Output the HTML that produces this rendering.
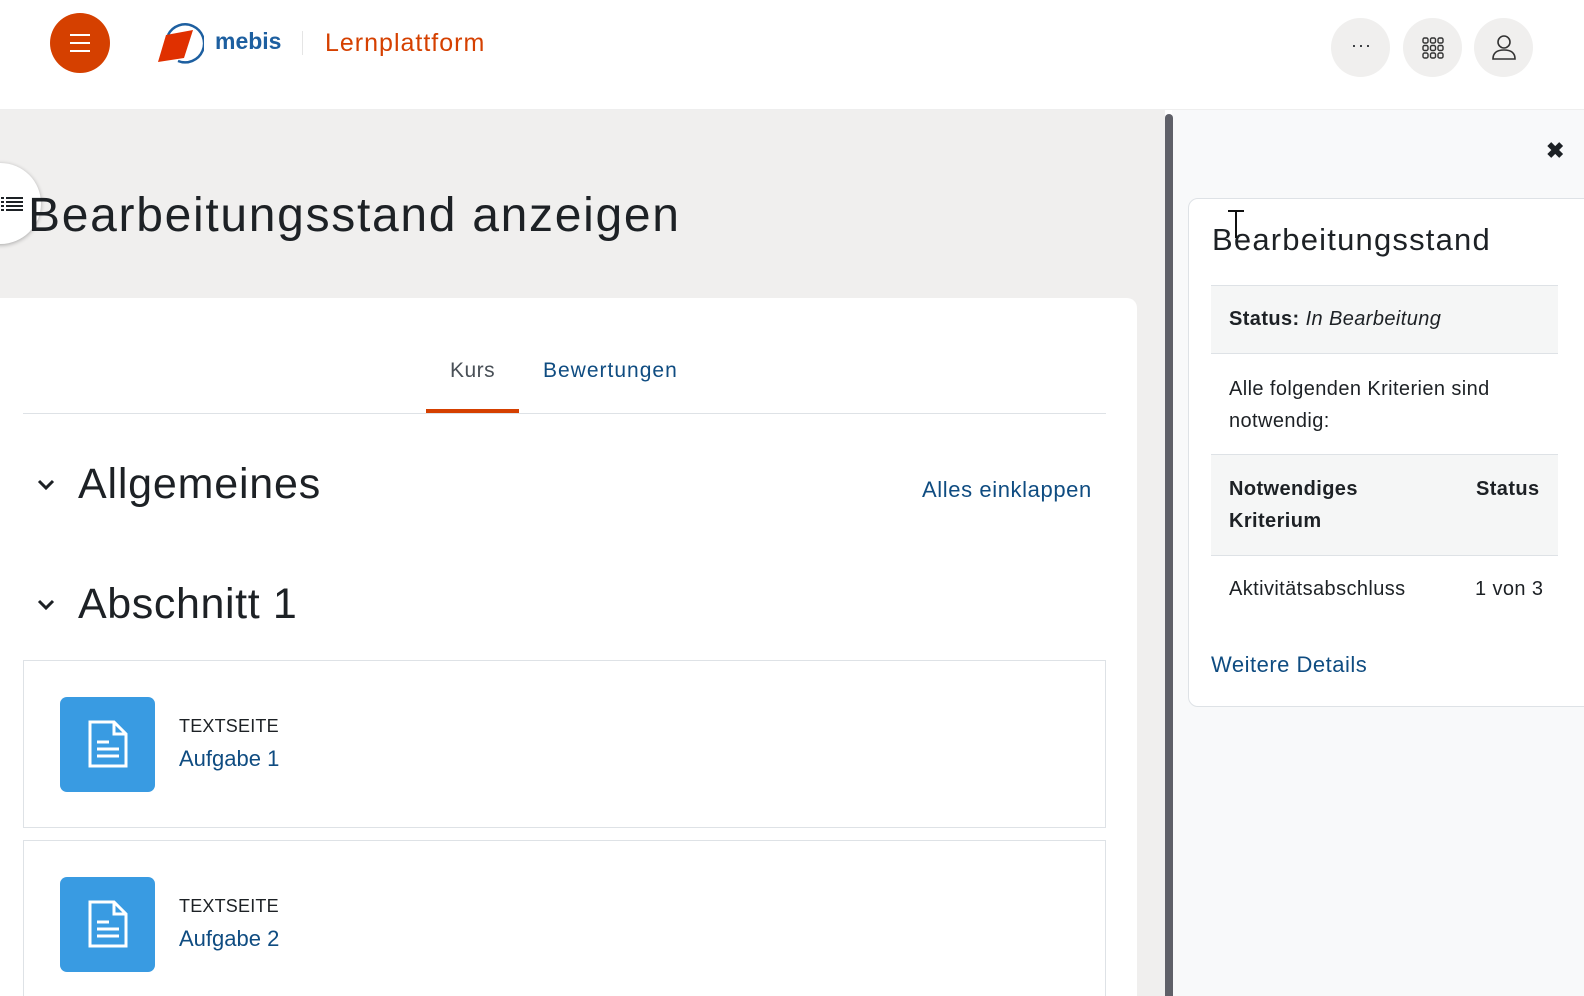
<!DOCTYPE html>
<html><head><meta charset="utf-8"><style>
*{box-sizing:border-box;margin:0;padding:0}
html,body{width:1584px;height:996px;overflow:hidden}
body{background:#fff;font-family:"Liberation Sans",sans-serif;color:#1d2125;position:relative}
.abs{position:absolute}
.hdr{left:0;top:0;width:1584px;height:110px;background:#fff;border-bottom:1px solid #eee}
.burger{left:50px;top:13px;width:60px;height:60px;border-radius:50%;background:#d54000}
.burger i{position:absolute;left:20px;width:20px;height:2px;background:#fff}
.rb{top:18px;width:59px;height:59px;border-radius:50%;background:#f0efee}
.main{left:0;top:110px;width:1165px;height:886px;background:#f0efee}
.card{left:0;top:298px;width:1137px;height:698px;background:#fff;border-top-right-radius:10px}
.drawer{left:1172px;top:110px;width:412px;height:886px;background:#f8f9fa}
.bar{left:1165px;top:114px;width:8px;height:882px;background:#5f6068;border-radius:4px 4px 0 0}
.act{left:23px;width:1083px;border:1px solid #dee2e6;background:#fff}
.ic{left:36px;width:95px;height:95px;background:#399be2;border-radius:7px}
.lbl{font-size:18px;color:#1d2125;letter-spacing:.2px}
.lnk{font-size:22px;color:#0f4c81}
.d{font-size:20px;letter-spacing:.4px}
</style></head><body>
<div class="abs hdr"></div>
<div class="abs burger"><i style="top:21px"></i><i style="top:29px"></i><i style="top:37px"></i></div>
<svg class="abs" style="left:156px;top:22px" width="48" height="42" viewBox="0 0 48 42"><path d="M12 13 A19 19 0 1 1 22 39" fill="none" stroke="#1d5fa0" stroke-width="2.5"/><path d="M10 13 L37 8 L28 36 L2 40 Z" fill="#e03000"/></svg>
<div class="abs" style="left:215px;top:28px;font-size:23px;font-weight:bold;color:#1d5fa0">mebis</div>
<div class="abs" style="left:302px;top:31px;width:1px;height:24px;background:#e5e5e5"></div>
<div class="abs" style="left:325px;top:29px;font-size:25px;color:#d54000;letter-spacing:1px">Lernplattform</div>
<div class="abs rb" style="left:1331px"><span style="position:absolute;left:20px;top:17px;font-size:18px;letter-spacing:1px">···</span></div>
<div class="abs rb" style="left:1403px"><svg style="position:absolute;left:19px;top:19px" width="22" height="22" viewBox="0 0 22 22" fill="none" stroke="#333" stroke-width="1.4"><rect x="1" y="1" width="5" height="5" rx="1.5"/><rect x="8.5" y="1" width="5" height="5" rx="1.5"/><rect x="16" y="1" width="5" height="5" rx="1.5"/><rect x="1" y="8.5" width="5" height="5" rx="1.5"/><rect x="8.5" y="8.5" width="5" height="5" rx="1.5"/><rect x="16" y="8.5" width="5" height="5" rx="1.5"/><rect x="1" y="16" width="5" height="5" rx="1.5"/><rect x="8.5" y="16" width="5" height="5" rx="1.5"/><rect x="16" y="16" width="5" height="5" rx="1.5"/></svg></div>
<div class="abs rb" style="left:1474px"><svg style="position:absolute;left:17px;top:16px" width="26" height="27" viewBox="0 0 26 27" fill="none" stroke="#333" stroke-width="1.6"><circle cx="13" cy="8" r="6"/><path d="M2 25 Q2 16 13 16 Q24 16 24 25 Z"/></svg></div>

<div class="abs main"></div>
<div class="abs" style="left:-40px;top:163px;width:81px;height:81px;border-radius:50%;background:#fff;box-shadow:0 1px 4px rgba(0,0,0,.3)"></div>
<svg class="abs" style="left:1px;top:196px" width="22" height="16" viewBox="0 0 22 16" fill="#1d2125"><rect x="0" y="1" width="3" height="2"/><rect x="5" y="1" width="17" height="2"/><rect x="0" y="5" width="3" height="2"/><rect x="5" y="5" width="17" height="2"/><rect x="0" y="9" width="3" height="2"/><rect x="5" y="9" width="17" height="2"/><rect x="0" y="13" width="3" height="2"/><rect x="5" y="13" width="17" height="2"/></svg>
<div class="abs" style="left:28px;top:188px;font-size:48px;color:#1d2125;letter-spacing:1.7px">Bearbeitungsstand anzeigen</div>

<div class="abs card"></div>
<div class="abs" style="left:23px;top:413px;width:1083px;height:1px;background:#dee2e6"></div>
<div class="abs" style="left:450px;top:359px;font-size:21px;color:#495057;letter-spacing:.5px">Kurs</div>
<div class="abs" style="left:426px;top:409px;width:93px;height:4px;background:#d54000"></div>
<div class="abs" style="left:543px;top:359px;font-size:21px;color:#0f4c81;letter-spacing:1px">Bewertungen</div>

<svg class="abs" style="left:37px;top:478px" width="18" height="14" viewBox="0 0 18 14"><path d="M2 3 L9 10 L16 3" fill="none" stroke="#1d2125" stroke-width="3"/></svg>
<div class="abs" style="left:78px;top:460px;font-size:43px;letter-spacing:.8px">Allgemeines</div>
<div class="abs" style="left:922px;top:477px;font-size:22px;color:#0f4c81;letter-spacing:.6px">Alles einklappen</div>
<svg class="abs" style="left:37px;top:598px" width="18" height="14" viewBox="0 0 18 14"><path d="M2 3 L9 10 L16 3" fill="none" stroke="#1d2125" stroke-width="3"/></svg>
<div class="abs" style="left:78px;top:580px;font-size:43px;letter-spacing:.6px">Abschnitt 1</div>

<div class="abs act" style="top:660px;height:168px"><div class="abs ic" style="top:36px"><svg style="position:absolute;left:27px;top:22px" width="42" height="50" viewBox="0 0 42 50" fill="none" stroke="#fff" stroke-width="3"><path d="M3 3 H27 L39 15 V47 H3 Z"/><path d="M27 3 V15 H39"/><path d="M10 23 H22 M10 30 H32 M10 37 H32"/></svg></div>
<div class="abs lbl" style="left:155px;top:55px">TEXTSEITE</div><div class="abs lnk" style="left:155px;top:85px">Aufgabe 1</div></div>
<div class="abs act" style="top:840px;height:170px"><div class="abs ic" style="top:36px"><svg style="position:absolute;left:27px;top:22px" width="42" height="50" viewBox="0 0 42 50" fill="none" stroke="#fff" stroke-width="3"><path d="M3 3 H27 L39 15 V47 H3 Z"/><path d="M27 3 V15 H39"/><path d="M10 23 H22 M10 30 H32 M10 37 H32"/></svg></div>
<div class="abs lbl" style="left:155px;top:55px">TEXTSEITE</div><div class="abs lnk" style="left:155px;top:85px">Aufgabe 2</div></div>

<div class="abs drawer"></div>
<div class="abs bar"></div>
<div class="abs" style="left:1546px;top:138px;font-size:22px;font-weight:bold">✖</div>
<div class="abs" style="left:1188px;top:198px;width:420px;height:509px;background:#fff;border:1px solid #dee2e6;border-radius:10px"></div>
<div class="abs" style="left:1212px;top:222px;font-size:31px;letter-spacing:1.2px">Bearbeitungsstand</div>
<div class="abs" style="left:1235px;top:210px;width:2px;height:28px;background:#111"></div>
<div class="abs" style="left:1228px;top:210px;width:16px;height:2px;background:#111"></div>
<div class="abs" style="left:1211px;top:285px;width:347px;height:69px;background:#f5f6f6;border-top:1px solid #dee2e6;border-bottom:1px solid #dee2e6"></div>
<div class="abs d" style="left:1229px;top:308px"><b>Status:</b> <i>In Bearbeitung</i></div>
<div class="abs d" style="left:1229px;top:373px;line-height:32px;width:300px">Alle folgenden Kriterien sind notwendig:</div>
<div class="abs" style="left:1211px;top:454px;width:347px;height:102px;background:#f5f6f6;border-top:1px solid #dee2e6;border-bottom:1px solid #dee2e6"></div>
<div class="abs d" style="left:1229px;top:473px;line-height:32px;font-weight:bold">Notwendiges<br>Kriterium</div>
<div class="abs d" style="left:1476px;top:473px;line-height:32px;font-weight:bold">Status</div>
<div class="abs d" style="left:1229px;top:578px">Aktivitätsabschluss</div>
<div class="abs d" style="left:1475px;top:578px">1 von 3</div>
<div class="abs" style="left:1211px;top:652px;font-size:22px;color:#0f4c81;letter-spacing:.5px">Weitere Details</div>
</body></html>
